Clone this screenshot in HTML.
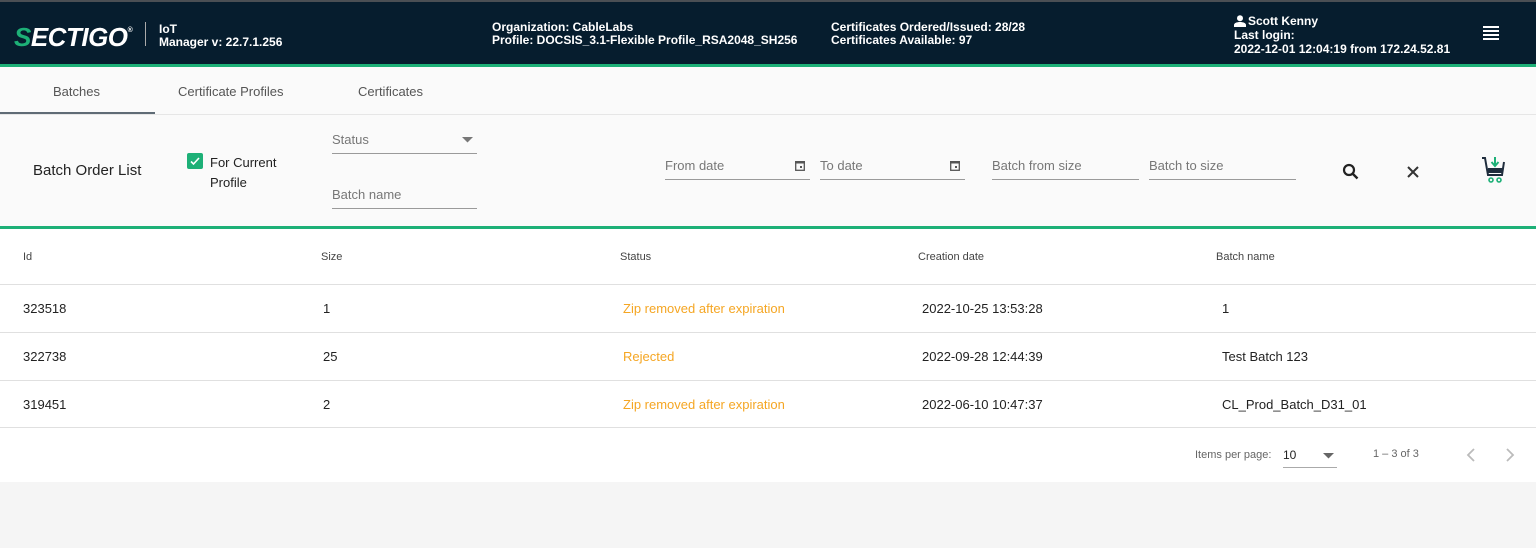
<!DOCTYPE html>
<html><head><meta charset="utf-8"><style>
*{margin:0;padding:0;box-sizing:border-box}
body{width:1536px;height:548px;overflow:hidden;background:#f5f5f5;font-family:"Liberation Sans",Arial,sans-serif;position:relative}
.a{position:absolute;white-space:nowrap}
.hd{position:absolute;left:0;top:0;width:1536px;height:64px;background:#061d2e;border-top:2px solid #4a4f54}
.hd .a{color:#fff;font-weight:bold;font-size:12px;line-height:13px}
.line{position:absolute;left:0;width:1536px;height:3px;background:#1db077}
.th{font-size:11px;color:#444;top:251px}
.td{font-size:13px;color:#222}
.or{color:#f5a623}
.hr{position:absolute;left:0;width:1536px;height:1px;background:#e0e0e0}
.ul{position:absolute;height:1px;background:#9a9a9a}
.ph{font-size:13px;color:#777}
</style></head><body>
<div class="hd">
 <div class="a" style="left:14px;top:14px;font-size:26px;font-style:italic;font-weight:bold;letter-spacing:-0.5px;line-height:30px;color:#fff"><span style="color:#1db077">S</span>ECTIGO<sup style="font-size:7px;vertical-align:14px">®</sup></div>
 <div style="position:absolute;left:145px;top:20px;width:1px;height:24px;background:#aaa"></div>
 <div class="a" style="left:159px;top:21px">IoT<br>Manager v: 22.7.1.256</div>
 <div class="a" style="left:492px;top:19px">Organization: CableLabs<br>Profile: DOCSIS_3.1-Flexible Profile_RSA2048_SH256</div>
 <div class="a" style="left:831px;top:19px">Certificates Ordered/Issued: 28/28<br>Certificates Available: 97</div>
 <svg class="a" style="left:1234px;top:13px" width="12" height="12" viewBox="0 0 12 12"><circle cx="6" cy="3.2" r="3" fill="#fff"/><path d="M0 12v-2c0-2 3-3 6-3s6 1 6 3v2z" fill="#fff"/></svg>
 <div class="a" style="left:1248px;top:13px">Scott Kenny</div>
 <div class="a" style="left:1234px;top:27px">Last login:</div>
 <div class="a" style="left:1234px;top:41px">2022-12-01 12:04:19 from 172.24.52.81</div>
 <svg class="a" style="left:1483px;top:24px" width="16" height="14"><g fill="#fff"><rect y="0" width="16" height="2"/><rect y="4" width="16" height="2"/><rect y="8" width="16" height="2"/><rect y="12" width="16" height="2"/></g></svg>
</div>
<div class="line" style="top:64px"></div>
<div style="position:absolute;left:0;top:67px;width:1536px;height:159px;background:#fafafa"></div>
<div class="a" style="left:53px;top:84px;font-size:13px;color:#555">Batches</div>
<div class="a" style="left:178px;top:84px;font-size:13px;color:#555">Certificate Profiles</div>
<div class="a" style="left:358px;top:84px;font-size:13px;color:#555">Certificates</div>
<div class="hr" style="top:114px;background:#e6e6e6"></div>
<div style="position:absolute;left:0;top:112px;width:155px;height:2px;background:#5f6b75"></div>

<div class="a" style="left:33px;top:162px;font-size:15px;color:#222">Batch Order List</div>
<div style="position:absolute;left:187px;top:153px;width:16px;height:16px;background:#1db077;border-radius:2px"></div>
<svg class="a" style="left:187px;top:153px" width="16" height="16"><path d="M4 8.5l2.5 2.5 5.5-6" stroke="#fff" stroke-width="1.6" fill="none"/></svg>
<div class="a" style="left:210px;top:153px;font-size:13px;color:#222;line-height:20px">For Current<br>Profile</div>
<div class="a ph" style="left:332px;top:132px">Status</div>
<svg class="a" style="left:462px;top:137px" width="11" height="6"><path d="M0 0h11L5.5 5.5z" fill="#777"/></svg>
<div class="ul" style="left:332px;top:153px;width:145px"></div>
<div class="a ph" style="left:332px;top:187px">Batch name</div>
<div class="ul" style="left:332px;top:208px;width:145px"></div>
<div class="a ph" style="left:665px;top:158px">From date</div>
<div class="ul" style="left:665px;top:179px;width:145px"></div>
<div class="a ph" style="left:820px;top:158px">To date</div>
<div class="ul" style="left:820px;top:179px;width:145px"></div>
<svg class="a" style="left:795px;top:160px" width="10" height="11"><rect x="0.7" y="1.7" width="8.6" height="8.6" fill="none" stroke="#555" stroke-width="1.3"/><rect x="0" y="1" width="10" height="2.5" fill="#555"/><rect x="5" y="6" width="2" height="2" fill="#555"/></svg>
<svg class="a" style="left:950px;top:160px" width="10" height="11"><rect x="0.7" y="1.7" width="8.6" height="8.6" fill="none" stroke="#555" stroke-width="1.3"/><rect x="0" y="1" width="10" height="2.5" fill="#555"/><rect x="5" y="6" width="2" height="2" fill="#555"/></svg>
<div class="a ph" style="left:992px;top:158px">Batch from size</div>
<div class="ul" style="left:992px;top:179px;width:147px"></div>
<div class="a ph" style="left:1149px;top:158px">Batch to size</div>
<div class="ul" style="left:1149px;top:179px;width:147px"></div>
<svg class="a" style="left:1342px;top:163px" width="18" height="18"><circle cx="7" cy="7" r="5" fill="none" stroke="#222" stroke-width="2.2"/><path d="M10.5 10.5l5 5" stroke="#222" stroke-width="2.4"/></svg>
<svg class="a" style="left:1407px;top:166px" width="12" height="12"><path d="M1 1l10 10M11 1L1 11" stroke="#333" stroke-width="2"/></svg>
<svg class="a" style="left:1481px;top:156px" width="26" height="30" viewBox="0 0 26 30"><path d="M1 2h3l3 17h14l2-13" fill="none" stroke="#1f2d3d" stroke-width="2"/><rect x="7" y="12" width="15" height="5" fill="#1f2d3d"/><path d="M14 1v8M10.5 6l3.5 4 3.5-4" stroke="#1db077" stroke-width="2" fill="none"/><circle cx="10" cy="24" r="2" fill="none" stroke="#1db077" stroke-width="1.6"/><circle cx="18" cy="24" r="2" fill="none" stroke="#1db077" stroke-width="1.6"/></svg>
<div class="line" style="top:226px"></div>

<div style="position:absolute;left:0;top:229px;width:1536px;height:253px;background:#fff"></div>
<div class="a th" style="left:23px">Id</div>
<div class="a th" style="left:321px">Size</div>
<div class="a th" style="left:620px">Status</div>
<div class="a th" style="left:918px">Creation date</div>
<div class="a th" style="left:1216px">Batch name</div>
<div class="hr" style="top:284px"></div>
<div class="a td" style="left:23px;top:301px">323518</div>
<div class="a td" style="left:323px;top:301px">1</div>
<div class="a td or" style="left:623px;top:301px">Zip removed after expiration</div>
<div class="a td" style="left:922px;top:301px">2022-10-25 13:53:28</div>
<div class="a td" style="left:1222px;top:301px">1</div>
<div class="hr" style="top:332px"></div>
<div class="a td" style="left:23px;top:349px">322738</div>
<div class="a td" style="left:323px;top:349px">25</div>
<div class="a td or" style="left:623px;top:349px">Rejected</div>
<div class="a td" style="left:922px;top:349px">2022-09-28 12:44:39</div>
<div class="a td" style="left:1222px;top:349px">Test Batch 123</div>
<div class="hr" style="top:380px"></div>
<div class="a td" style="left:23px;top:397px">319451</div>
<div class="a td" style="left:323px;top:397px">2</div>
<div class="a td or" style="left:623px;top:397px">Zip removed after expiration</div>
<div class="a td" style="left:922px;top:397px">2022-06-10 10:47:37</div>
<div class="a td" style="left:1222px;top:397px">CL_Prod_Batch_D31_01</div>
<div class="hr" style="top:427px"></div>
<div class="a" style="left:1195px;top:449px;font-size:11px;color:#666">Items per page:</div>
<div class="a" style="left:1283px;top:448px;font-size:12px;color:#222">10</div>
<svg class="a" style="left:1323px;top:453px" width="11" height="6"><path d="M0 0h11L5.5 5.5z" fill="#666"/></svg>
<div class="ul" style="left:1283px;top:467px;width:54px;background:#aaa"></div>
<div class="a" style="left:1373px;top:448px;font-size:11px;color:#666">1 – 3 of 3</div>
<svg class="a" style="left:1466px;top:448px" width="10" height="14"><path d="M8 1L2 7l6 6" stroke="#bbb" stroke-width="1.8" fill="none"/></svg>
<svg class="a" style="left:1505px;top:448px" width="10" height="14"><path d="M2 1l6 6-6 6" stroke="#bbb" stroke-width="1.8" fill="none"/></svg>
</body></html>
